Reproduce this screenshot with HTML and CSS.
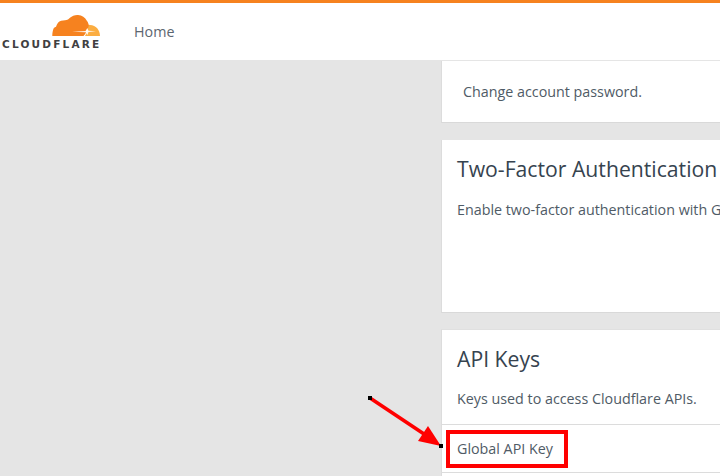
FILE: index.html
```html
<!DOCTYPE html>
<html lang="en">
<head>
<meta charset="utf-8">
<title>Cloudflare profile</title>
<link rel="stylesheet" href="styles.css">
</head>
<body>
<header class="topbar">
  <div class="logo">
    <svg class="cloud" width="48" height="21" viewBox="0 0 48 21">
      <path fill="#fbad41" d="M33 21 L48 21 C48 15 44 10 38 10 C35.500 9.500 33 10 30 11 L36 15 Z"/>
      <path fill="#f6821f" d="M0.300 21 L31.500 21 C33.500 19 34.500 17 34.500 15.500 C36 13.500 36.800 11.500 36.700 10 C36.500 8.500 35.800 7 35 6 C33 2.500 30 0.200 26 0 C23 -0.100 20 1 18 2.700 L16 4.500 C15 4.800 14 5 13 5.300 C10.500 5.300 7.500 6 6 7.700 C5 9 4.500 10.500 4 11.800 C2.500 12.300 1.500 13.200 1.300 14.300 C0.500 16.500 0.300 19 0.300 21 Z"/>
      <path fill="#fff" opacity="0.900" d="M20 16.700 L33.500 16 L35.300 13 L36.500 15.800 L44 16.300 L36.500 17 L35.300 20 L33.700 17.200 Z"/>
    </svg>
    <span class="wordmark">CLOUDFLARE</span>
  </div>
  <a class="nav-link">Home</a>
</header>
<main class="page">
  <div class="column">
    <section class="card card-password">
      <p class="text">Change account password.</p>
    </section>
    <section class="card card-tfa">
      <h2 class="title">Two-Factor Authentication</h2>
      <p class="text nowrap">Enable two-factor authentication with Google Authenticator</p>
    </section>
    <section class="card card-api">
      <h2 class="title">API Keys</h2>
      <p class="text">Keys used to access Cloudflare APIs.</p>
      <div class="row"><span class="row-label">Global API Key</span></div>
    </section>
  </div>
</main>
<div class="highlight"></div>
<svg class="arrow" width="90" height="60" viewBox="0 0 90 60">
  <line x1="10" y1="9" x2="70" y2="49" stroke="#f00" stroke-width="3.500"/>
  <path fill="#f00" d="M81 57 L58 52 L68 37 Z"/>
  <rect x="8" y="7" width="4" height="4" fill="#000"/>
  <rect x="79" y="55" width="4" height="4" fill="#000"/>
</svg>
</body>
</html>
```

FILE: styles.css
```css
* { box-sizing: border-box; }
html, body { margin: 0; height: 476px; overflow: hidden; }
body {
  position: relative;
  display: flex;
  flex-direction: column;
  background: #e5e5e5;
  font-family: "Open Sans", sans-serif;
  color: #36434f;
}
.topbar {
  flex: none;
  height: 61px;
  display: flex;
  align-items: center;
  gap: 34px;
  background: #fff;
  border-top: 3px solid #f6821f;
  border-bottom: 1px solid #e5e5e5;
  padding-left: 2px;
}
.logo {
  width: 98px;
  display: flex;
  flex-direction: column;
  align-items: flex-start;
}
.cloud { display: block; margin-left: 50px; margin-bottom: 3px; }
.wordmark {
  font-family: "DejaVu Sans", sans-serif;
  font-weight: 700;
  font-size: 10.500px;
  line-height: 10px;
  letter-spacing: 2.200px;
  color: #404041;
  white-space: nowrap;
}
.nav-link { font-size: 14.300px; color: #5c6670; }
.page { flex: 1; min-height: 0; padding-left: 441px; }
.column { display: flex; flex-direction: column; gap: 17px; }
.card {
  background: #fff;
  border-left: 1px solid #dcdcdc;
  border-bottom: 1px solid #d9d9d9;
}
.card-password { height: 62px; padding: 21px 0 0 21px; }
.card-tfa { height: 173px; padding: 14px 0 0 15px; }
.card-api { height: 200px; padding-top: 14px; border-top: 1px solid #e0e0e0; margin-top: -1px; }
.title {
  margin: 0 0 16px;
  font-size: 21.200px;
  line-height: 30px;
  font-weight: 400;
  color: #36434f;
  white-space: nowrap;
}
.text {
  margin: 0;
  font-size: 14.300px;
  line-height: 20px;
  color: #4f5b66;
}
.nowrap { white-space: nowrap; }
.card-api .title, .card-api .text { margin-left: 15px; }
.card-api .title { margin-bottom: 15px; }
.card-api .text { height: 35px; }
.row {
  height: 49px;
  border-top: 1px solid #dcdcdc;
  border-bottom: 1px solid #dcdcdc;
  padding: 14px 0 0 15px;
}
.row-label { font-size: 14.300px; line-height: 20px; color: #4f5b66; display: block; }
.highlight {
  position: absolute;
  left: 446px;
  top: 430px;
  width: 122px;
  height: 38px;
  border: 4px solid #f00;
}
.arrow { position: absolute; left: 360px; top: 389px; }
```
